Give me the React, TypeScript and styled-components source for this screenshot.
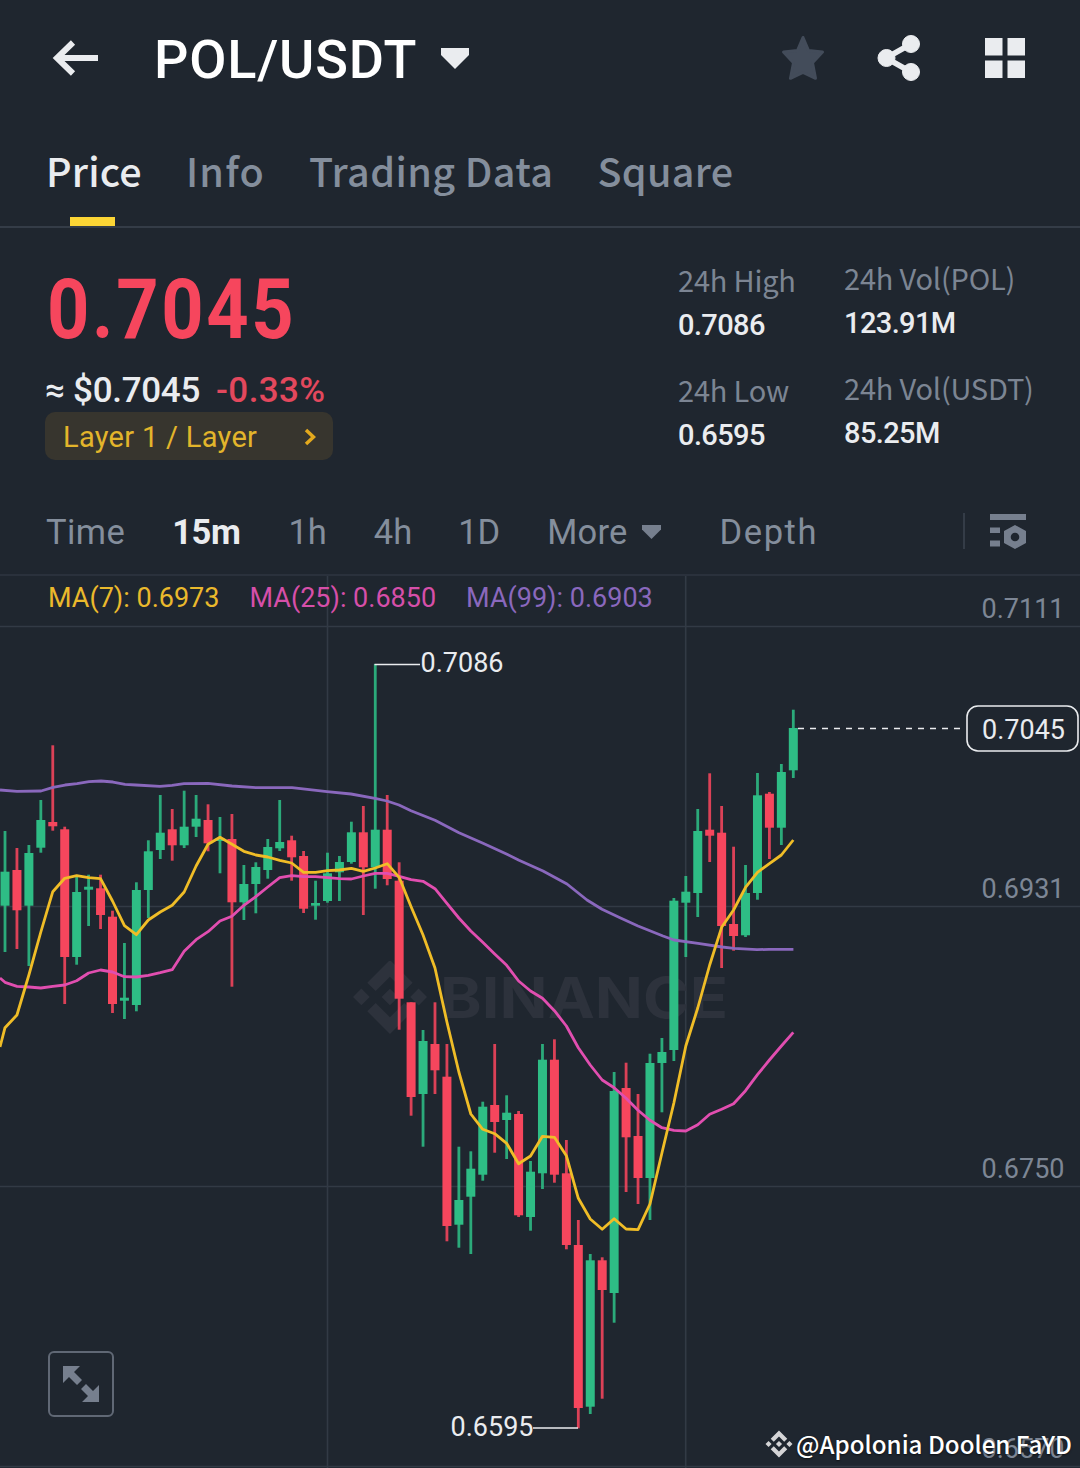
import React from 'react';
import styled, { createGlobalStyle } from 'styled-components';

const SANS = "'Noto Sans CJK SC', 'Noto Sans', sans-serif";
const NUM = "Roboto, 'Liberation Sans', sans-serif";
const C = {
  bg: '#1f262f', line: '#343c47', text: '#eaecef', muted: '#848e9c', dim: '#767f8e',
  red: '#f6465d', green: '#2ebd85', yellow: '#f0b90b', pink: '#e14eb0', purple: '#8a68bd',
};

const Global = createGlobalStyle`
  body { margin: 0; background: ${C.bg}; }
  * { box-sizing: border-box; }
`;

const Page = styled.main`
  width: 1080px;
  height: 1468px;
  overflow: hidden;
  display: flex;
  flex-direction: column;
  background: ${C.bg};
  color: ${C.text};
  font-family: ${NUM};
  white-space: nowrap;
`;

const Header = styled.header`
  height: 116px;
  padding: 0 55px 0 52px;
  display: flex;
  align-items: center;
`;
const Title = styled.h1<{ $ls: number }>`
  margin: 0 24px 0 55px;
  font: 500 54px/60px ${NUM};
  letter-spacing: ${p => p.$ls}px;
  color: #fff;
  padding-top: 4px;
`;
const Actions = styled.div`
  margin-left: auto;
  display: flex;
  align-items: center;
`;
const Icon = styled.svg<{ $ml?: number }>`
  display: block;
  flex: none;
  margin-left: ${p => p.$ml ?? 0}px;
`;

const Tabs = styled.nav`
  height: 112px;
  padding-left: 46px;
  display: flex;
  gap: 44px;
  border-bottom: 2px solid ${C.line};
`;
const Tab = styled.div<{ $on?: boolean; $ls: number }>`
  display: flex;
  flex-direction: column;
  align-items: center;
  justify-content: space-between;
  padding-top: 27px;
  font: 500 39.5px/54px ${SANS};
  letter-spacing: ${p => p.$ls}px;
  color: ${p => (p.$on ? C.text : C.muted)};
`;
const Underline = styled.i`
  width: 45px;
  height: 9px;
  margin-right: 2px;
  background: #fcd535;
`;

const Summary = styled.section`
  height: 260px;
  display: flex;
  justify-content: space-between;
  padding: 36px 0 0 45px;
`;
const Quote = styled.div`
  display: flex;
  flex-direction: column;
  align-items: flex-start;
`;
const Price = styled.div`
  margin-left: 2px;
  color: ${C.red};
  font-weight: 700;
  font-size: 84px;
  line-height: 92px;
  letter-spacing: 3px;
  transform: scaleX(0.88);
  transform-origin: left;
`;
const Converted = styled.div`
  display: flex;
  gap: 16px;
  height: 56px;
  padding-top: 13px;
  align-items: center;
  font: 500 35px/40px ${NUM};
`;
const Usd = styled.span<{ $ls: number }>`
  letter-spacing: ${p => p.$ls}px;
`;
const Change = styled(Usd)`
  color: #e3485d;
`;
const Tag = styled.div`
  width: 288px;
  height: 48px;
  border-radius: 10px;
  background: #37352e;
  color: #e3b52b;
  display: flex;
  align-items: center;
  justify-content: space-between;
  padding: 1px 17px 0 18px;
  font: 400 29px/46px ${NUM};
  letter-spacing: 0.3px;
`;
const Stats = styled.div`
  display: grid;
  grid-template-columns: 166px 236px;
  grid-template-rows: 110px 110px;
  margin-top: -4px;
`;
const Stat = styled.div<{ $up?: boolean }>`
  padding-top: ${p => (p.$up ? 0 : 2)}px;
  display: flex;
  flex-direction: column;
`;
const StatLabel = styled.span`
  font: 400 29px/34px ${SANS};
  letter-spacing: -0.2px;
  color: #7c8593;
`;
const StatValue = styled.span`
  margin-top: 10px;
  font: 500 29px/38px ${NUM};
  letter-spacing: -0.6px;
`;

const Intervals = styled.nav`
  height: 88px;
  padding: 2px 54px 0 46px;
  display: flex;
  align-items: center;
  border-bottom: 2px solid #2a313c;
  font: 400 34.5px/40px ${NUM};
  color: ${C.muted};
`;
const Interval = styled.span<{ $on?: boolean; $ls?: number; $ml?: number; $mr?: number }>`
  margin-left: ${p => p.$ml ?? 0}px;
  margin-right: ${p => p.$mr ?? 47}px;
  letter-spacing: ${p => p.$ls ?? 0}px;
  font-weight: ${p => (p.$on ? 700 : 400)};
  color: ${p => (p.$on ? C.text : 'inherit')};
`;
const Divider = styled.i`
  width: 2px;
  height: 36px;
  margin: 0 25px 2px auto;
  background: ${C.line};
`;

const Chart = styled.section`
  position: relative;
  height: 892px;
`;
const Plot = styled.svg`
  display: block;
`;
const Legend = styled.div`
  position: absolute;
  left: 48px;
  top: 4px;
  display: flex;
  gap: 30px;
  font: 400 27px/36px ${NUM};
`;
const LegendItem = styled.span<{ $c: string }>`
  color: ${p => p.$c};
`;
const Expand = styled.button`
  position: absolute;
  left: 48px;
  bottom: 51px;
  width: 66px;
  height: 66px;
  padding: 0;
  display: grid;
  place-items: center;
  background: transparent;
  border: 2px solid #606875;
  border-radius: 6px;
`;
const Credit = styled.div`
  position: absolute;
  right: 8px;
  bottom: 6px;
  display: flex;
  align-items: center;
  gap: 3px;
  color: #fff;
  font: 500 24.15px/36px ${SANS};
  text-shadow: 0 1px 2px rgba(0, 0, 0, 0.6);
`;

// [rising, high, body top, body bottom, low] in plot pixels
const CANDLES: [number, number, number, number, number][] = [
  [1,831,871.7,905.7,952],[0,848,870,910.3,949],[1,845,853,905.7,966],[1,800,820,847.7,852.7],
  [0,745.3,822,826.3,830.7],[0,826.7,829.3,957,1004],[1,876,892,957,964.7],[1,874.7,886.7,889.7,926],
  [0,874.7,888.3,915,929],[0,910.7,916.7,1004,1013],[1,943,997.7,1000.7,1019],[1,882.3,890,1005,1011.3],
  [1,840.3,851.3,890,918],[1,795,832.7,850,859],[0,809,829.3,845.3,860.7],[1,790.7,826.7,845.3,848],
  [1,795,818.7,826.7,837],[0,804.3,820,843.3,851.3],[1,817,838.3,841,873.3],[0,814,839,902.3,986.7],
  [1,865,884,902.3,920],[1,862.3,867,884,913.3],[1,839,847,870,878.7],[1,800,842,848.3,851],
  [0,835.7,840.3,857.3,880.7],[0,851,856,908.7,913],[1,880.7,903,905.7,919.7],[1,852.7,873.3,901,902.7],
  [1,856,862,872.3,901],[1,821.7,832.3,862,863.7],[0,806,832.3,867.3,915],[1,664,829.7,867.3,888.7],
  [0,795,829.7,879,885.3],[0,862.3,880.7,998.7,1029.7],[0,1002.3,1002.3,1097,1115.7],[1,1030,1041,1094,1146.7],
  [0,1002.3,1044,1070.3,1094],[0,1044,1076.7,1226,1241.3],[1,1146.7,1200,1224.7,1247.7],[1,1151.3,1168.7,1196.7,1254],
  [1,1101.7,1106.7,1174.7,1180.7],[0,1044,1105,1122,1152.7],[1,1095.3,1112.7,1120,1159],[0,1111,1114,1215.3,1217],
  [1,1161,1171.7,1217,1230.7],[1,1044,1059.7,1173.3,1189],[0,1039.3,1059.7,1174.7,1182.7],[0,1140,1173.3,1245,1249.3],
  [0,1220,1245,1408,1428.3],[1,1254,1260.3,1406.7,1414],[0,1257.3,1260.3,1290,1398.7],[1,1072,1091,1293,1322.7],
  [0,1062.7,1088,1137.3,1192],[0,1094,1136,1178,1204],[1,1053.7,1063,1178,1220],[1,1038,1052,1063,1112.3],
  [1,898,900.7,1050,1061],[1,876,891.7,902.7,957],[1,809,831,893,917],[0,773.3,829.7,835.7,862],
  [0,806,832.7,926,968],[0,846.7,924,936,950.7],[1,865,893,935.3,937],[1,773,795.3,893,899.7],
  [0,792,793.7,827.7,859],[1,764,772,827.7,845],[1,709.7,728,770.3,778],
];
const MA7 = [1027.7,1015,975,932,891.7,878.3,875.7,877.7,878.7,901,925.7,934.7,920,912,905.3,892,866,844.3,837.3,844.3,851.3,855,857,860.3,863,872.3,872.3,870.7,870,868.3,871.3,868,863.7,877.3,906.7,935,968,1022,1072,1114,1129.3,1133.7,1143.3,1163.7,1156,1136.3,1137.3,1155.7,1198.3,1219,1229.3,1218.7,1229,1229.7,1204,1153,1103,1046,1008,965,927.3,910,887.3,872.3,863.7,855,840];
const MA25 = [982.3,986.3,987,988,986.3,985,980.7,973,970,972,976.7,977,975.3,972.7,969.7,951.3,939.7,931.7,921,916.3,905.3,896.7,887,877.7,875.7,876.7,876.7,877.7,878.7,879,876,873.3,873.3,876.3,879.7,881.3,888.7,903.3,918,931,942.3,954,965.3,981,991,998.3,1010.7,1026,1047.7,1065,1080,1087.7,1098.3,1110.3,1120.3,1127.7,1130.3,1131,1124.7,1114.3,1109.3,1103.7,1090.7,1074.7,1060,1046,1032.3];
const MA99 = '0,790 17,791.3 41,791 53,787.3 65,785 77,783.7 89,781.7 101,781 113,782 125,784.3 136,785 160,786.3 172,785.3 184,783.7 208,783.3 232,786 256,787.7 292,787.7 327,791.7 351,794 375,798.3 387,801 399,805 411,810.7 435,820.3 459,832.7 483,843.3 507,854.3 519,860.3 543,871 567,884 587,900 602,909.3 620,917.7 638,926 663,936 674,940 698,943.3 722,947 734,948.3 757,949.7 769,949.3 793.4,949.3';

const xAt = (i: number) => 5 + i * 11.944;
const series = (ys: number[], start: string) => start + ' ' + ys.map((y, i) => `${xAt(i)},${y}`).join(' ');

const Mark = ({ cx, cy, r, fill }: { cx: number; cy: number; r: number; fill: string }) => (
  <g transform={`translate(${cx - r} ${cy - r}) scale(${r / 12})`} fill={fill}>
    <path d="M16.624 13.9202l2.7175 2.7154-7.353 7.353-7.353-7.352 2.7175-2.7164 4.6355 4.6595 4.6356-4.6595zm4.6366-4.6366L24 12l-2.7154 2.7164L18.5682 12l2.6924-2.7164zm-9.272.001l2.7163 2.6914-2.7164 2.7174v-.001L9.2721 12l2.7164-2.7154zm-9.2722-.001L5.4088 12l-2.6914 2.6924L0 12l2.7164-2.7164zM11.9885.0115l7.353 7.329-2.7174 2.7154-4.6356-4.6356-4.6355 4.6595-2.7174-2.7154 7.353-7.353z" />
  </g>
);

const StatCell = ({ label, value, up }: { label: string; value: string; up?: boolean }) => (
  <Stat $up={up}>
    <StatLabel>{label}</StatLabel>
    <StatValue>{value}</StatValue>
  </Stat>
);

export default function App() {
  return (
    <Page>
      <Global />
      <Header>
        <Icon width="47" height="36" viewBox="0 0 47 36" fill="none" stroke={C.text} strokeWidth="6">
          <path d="M46 18H5M21 2.500 5 18 21 33.500" />
        </Icon>
        <Title $ls={0.8}>POL/USDT</Title>
        <Icon width="28" height="21" viewBox="0 0 28 21" fill={C.text}><path d="M0 0h28v7L14 21 0 7z" /></Icon>
        <Actions>
          <Icon width="46" height="46" viewBox="0 0 46 46" fill="#434c5a" stroke="#434c5a" strokeWidth="3" strokeLinejoin="round">
            <path d="M24 2.500l5.500 13 14 1.500-10 10.800 3 15.500L24 37.500l-12.500 5.800 3-15.500L4.500 17l14-1.500z" />
          </Icon>
          <Icon $ml={52} width="44" height="46" viewBox="0 0 44 46" fill={C.text} stroke={C.text}>
            <path d="M34 9 9 23l25 14" fill="none" strokeWidth="5.500" />
            <circle cx="9.500" cy="23" r="8.500" /><circle cx="34" cy="9" r="8.500" /><circle cx="34" cy="37" r="8.500" />
          </Icon>
          <Icon $ml={64} width="40" height="40" viewBox="0 0 40 40" fill={C.text}>
            <path d="M0 0h17.500v17.500H0zM22.500 0H40v17.500H22.500zM0 22.500h17.500V40H0zM22.500 22.500H40V40H22.500z" />
          </Icon>
        </Actions>
      </Header>

      <Tabs>
        <Tab $on $ls={0.2}>Price<Underline /></Tab>
        <Tab $ls={1.2}>Info</Tab>
        <Tab $ls={0.4}>Trading Data</Tab>
        <Tab $ls={0.3}>Square</Tab>
      </Tabs>

      <Summary>
        <Quote>
          <Price>0.7045</Price>
          <Converted><Usd $ls={-0.3}>≈ $0.7045</Usd><Change $ls={0.4}>-0.33%</Change></Converted>
          <Tag>
            Layer 1 / Layer
            <Icon width="12" height="18" viewBox="0 0 12 18" fill="none" stroke="#e3a91d" strokeWidth="3.500"><path d="M2 2l7.500 7L2 16" /></Icon>
          </Tag>
        </Quote>
        <Stats>
          <StatCell label="24h High" value="0.7086" />
          <StatCell up label="24h Vol(POL)" value="123.91M" />
          <StatCell label="24h Low" value="0.6595" />
          <StatCell up label="24h Vol(USDT)" value="85.25M" />
        </Stats>
      </Summary>

      <Intervals>
        <Interval $ls={0.4}>Time</Interval>
        <Interval $on $ls={-0.4} $mr={48}>15m</Interval>
        <Interval>1h</Interval>
        <Interval $mr={46}>4h</Interval>
        <Interval>1D</Interval>
        <Interval $ls={0.2} $mr={14}>More</Interval>
        <Icon width="19" height="14" viewBox="0 0 19 14" fill={C.dim}><path d="M0 0h19v4.500L9.500 14 0 4.500z" /></Icon>
        <Interval $ml={59} $mr={0} $ls={1.6}>Depth</Interval>
        <Divider />
        <Icon width="36" height="37" viewBox="0 0 36 37" fill={C.dim}>
          <path d="M0 0h36v6H0zM0 13.500h10V19H0zM0 26.500h10v6H0z" />
          <path fillRule="evenodd" d="M25 11l11 6v12l-11 6-11-6V17zM25 18.700a4.300 4.300 0 1 0 0 8.600 4.300 4.300 0 0 0 0-8.600z" />
        </Icon>
      </Intervals>

      <Chart>
        <Plot width="1080" height="892" viewBox="0 576 1080 892" fontFamily="Roboto, sans-serif" fontSize="27">
          <g stroke="#323a45" strokeWidth="1.600">
            {[626.5, 906.5, 1186.5, 1466.5].map(y => <line key={y} x1="0" x2="1080" y1={y} y2={y} />)}
            {[327.5, 685.7].map(x => <line key={x} x1={x} x2={x} y1="576" y2="1468" />)}
          </g>
          <Mark cx={390} cy={997} r={37} fill="#2d323c" />
          <text x="440" y="1017.500" fontFamily="Inter, sans-serif" fontWeight="700" fontSize="57" textLength="288" lengthAdjust="spacingAndGlyphs" fill="#2d323c">BINANCE</text>
          <g fill="#7d8695">
            <text x="981.500" y="617.500">0.7111</text>
            <text x="981.500" y="897.500">0.6931</text>
            <text x="981.500" y="1177.500">0.6750</text>
            <text x="981.500" y="1457.500">0.6570</text>
          </g>
          {CANDLES.map(([up, h, t, b, l], i) => (
            <g key={i} fill={up ? C.green : C.red}>
              <rect x={xAt(i) - 1.400} y={h} width="2.800" height={l - h} opacity="0.880" />
              <rect x={xAt(i) - 4.500} y={t} width="9" height={b - t} />
            </g>
          ))}
          <g fill="none" strokeWidth="2.800" strokeLinejoin="round">
            <polyline points={MA99} stroke={C.purple} />
            <polyline points={series(MA25, '0,978')} stroke={C.pink} />
            <polyline points={series(MA7, '0,1047')} stroke="#f0bd27" />
          </g>
          <g stroke={C.text} strokeWidth="1.600" fill="none">
            <path d="M374.500 664.500H420M533 1428H578" />
            <path d="M798 728.500H960" strokeDasharray="6 6" />
            <rect x="967" y="706" width="111" height="45" rx="11" fill={C.bg} />
          </g>
          <g fill={C.text}>
            <text x="982" y="739">0.7045</text>
            <text x="420.500" y="672">0.7086</text>
            <text x="450.500" y="1436">0.6595</text>
          </g>
        </Plot>
        <Legend>
          <LegendItem $c="#eab92c">MA(7): 0.6973</LegendItem>
          <LegendItem $c="#d64fa9">MA(25): 0.6850</LegendItem>
          <LegendItem $c={C.purple}>MA(99): 0.6903</LegendItem>
        </Legend>
        <Expand aria-label="Expand chart">
          <svg width="38" height="38" viewBox="0 0 38 38" fill={C.dim}>
            <path d="M1 1h17l-6 6 8 8-5 5-8-8-6 6zM37 37H20l6-6-7-7 5-5 7 7 6-6z" />
          </svg>
        </Expand>
        <Credit>
          <svg width="28" height="28" viewBox="0 0 28 28"><Mark cx={14} cy={14} r={13.5} fill="#d4d4d6" /></svg>
          @Apolonia Doolen FaYD
        </Credit>
      </Chart>
    </Page>
  );
}
